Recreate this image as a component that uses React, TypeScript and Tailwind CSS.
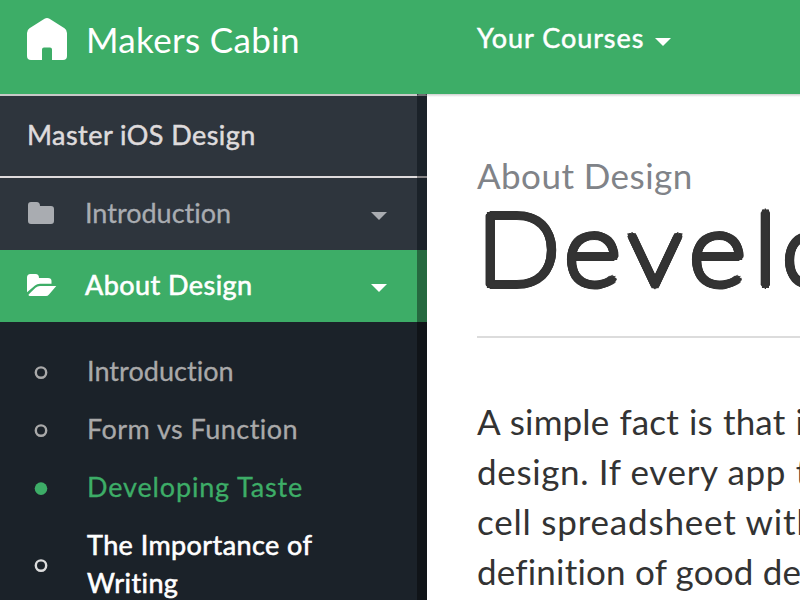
import React from 'react';

function HomeIcon() {
  return (
    <svg className="h-[42px] w-[42px]" viewBox="0 0 42 42" fill="#fff">
      <path d="M18.500 .8 Q21 -.8 23.500 .8 L38.500 10.300 Q41 12 41 15 V38 Q41 42 37 42 H26 V31.500 Q26 29.500 24 29.500 H18 Q16 29.500 16 31.500 V42 H5 Q1 42 1 38 V15 Q1 12 3.500 10.300 Z" />
    </svg>
  );
}

function FolderIcon() {
  return (
    <svg className="h-[22px] w-[30px]" viewBox="0 0 30 22" fill="#a9acb1">
      <path d="M4 0 H9.500 Q13 0 13 4 H24 Q27 4 27 7 V19 Q27 22 24 22 H4 Q1 22 1 19 V3 Q1 0 4 0 Z" />
    </svg>
  );
}

function FolderOpenIcon() {
  return (
    <svg className="h-[22px] w-[30px]" viewBox="0 0 30 22" fill="#fff">
      <path d="M3.500 0 H8.500 Q12 0 12 4 H21 Q24.500 4 24.500 7 V9.800 H13 Q10 9.800 8 11.500 L0 18.300 V3.500 Q0 0 3.500 0 Z" />
      <path d="M13 12 H29.300 L22 20.500 Q20.800 22 19 22 H3 Q1.300 22 1.600 20.500 L8.500 13.800 Q10.500 12 13 12 Z" />
    </svg>
  );
}

function Caret({ className }: { className: string }) {
  return (
    <svg className={`h-[8px] w-[16px] ${className}`} viewBox="0 0 16 8" fill="currentColor">
      <path d="M0 0 H16 L8 8 Z" />
    </svg>
  );
}

function Bullet({ color, filled }: { color: string; filled?: boolean }) {
  return (
    <svg className="mt-[3px] h-[14px] w-[14px] shrink-0" viewBox="0 0 14 14">
      <circle cx="7" cy="6.600" r={filled ? 6.3 : 5.2} fill={filled ? color : 'none'} stroke={filled ? 'none' : color} strokeWidth="2.4" />
    </svg>
  );
}

const lessons = [
  { title: 'Introduction', text: 'text-[#a9a9a9] tracking-[0.050px] [-webkit-text-stroke:0.3px_#a9a9a9]', color: '#a9a9a9' },
  { title: 'Form vs Function', text: 'text-[#a9a9a9] tracking-[0.450px] [-webkit-text-stroke:0.3px_#a9a9a9]', color: '#a9a9a9' },
  { title: 'Developing Taste', text: 'text-[#3dad67] tracking-[0.850px] [-webkit-text-stroke:0.3px_#3dad67]', color: '#3dad67', filled: true },
  { title: 'The Importance of Writing', text: 'text-white tracking-[0.420px] [-webkit-text-stroke:0.6px_#fff]', color: '#dcdcdc' },
];

export default function App() {
  return (
    <div className="flex h-[600px] w-[800px] flex-col overflow-hidden bg-white font-['Lato',sans-serif] [font-variant-ligatures:none]">
      <header className="flex h-[94px] shrink-0 bg-[#3dad67] text-white">
        <div className="flex w-[477px] pt-[18px] pl-[26px]">
          <HomeIcon />
          <span className="ml-[18px] text-[35px] leading-[42px] tracking-[0.350px] whitespace-nowrap">Makers Cabin</span>
        </div>
        <nav className="flex pt-[18px]">
          <span className="w-[166px] text-[27px] leading-[39px] tracking-[0.950px] whitespace-nowrap [-webkit-text-stroke:0.5px_#fff]">Your Courses</span>
          <Caret className="mt-[20px] ml-[12px]" />
        </nav>
      </header>

      <div className="flex min-h-0 flex-1">
        <aside className="flex w-[427px] shrink-0 bg-[#1b2229]">
          <div className="flex w-[417px] flex-col">
            <div className="h-[84px] shrink-0 border-y-2 border-t-[#c8c8c8] border-b-[#dfdbdc] bg-[#2e353d] pl-[27px] text-[27px] leading-[77px] tracking-[0.450px] text-[#dfdbdc] [-webkit-text-stroke:0.5px_#dfdbdc]">
              Master iOS Design
            </div>
            <div className="flex h-[72px] shrink-0 items-center bg-[#2e353d] pl-[27px] text-[#a9acb1]">
              <div className="mb-[2px]"><FolderIcon /></div>
              <span className="mb-[3px] ml-[28px] w-[286px] text-[27px] leading-[40px] [-webkit-text-stroke:0.3px_#a9acb1]">Introduction</span>
              <Caret className="mt-[4px]" />
            </div>
            <div className="flex h-[72px] shrink-0 items-center bg-[#3dad67] pl-[27px] text-white">
              <div className="mb-[2px]"><FolderOpenIcon /></div>
              <span className="mb-[3px] ml-[28px] w-[286px] text-[27px] leading-[40px] tracking-[0.450px] [-webkit-text-stroke:0.6px_#fff]">About Design</span>
              <Caret className="mt-[4px]" />
            </div>
            <ul className="flex flex-col gap-[20px] pt-[30px] pl-[34px]">
              {lessons.map((l) => (
                <li key={l.title} className="flex items-center">
                  <Bullet color={l.color} filled={l.filled} />
                  <span className={`ml-[39px] w-[250px] text-[27px] leading-[38px] ${l.text}`}>{l.title}</span>
                </li>
              ))}
            </ul>
          </div>
          <div className="w-[10px]">
            <div className="h-[2px] rounded-t-[4px] bg-[#6e7073]" />
            <div className="h-[80px] bg-[#1b2229]" />
            <div className="h-[2px] bg-[#858384]" />
            <div className="h-[72px] bg-[#1b2229]" />
            <div className="h-[72px] bg-[#26693f]" />
            <div className="h-[278px] bg-[#101418]" />
          </div>
        </aside>

        <main className="min-w-0 flex-1">
          <div className="h-[3px] bg-linear-to-b from-[#cfcfcf] to-white" />
          <div className="ml-[50px] w-[700px] pt-[56px]">
            <p className="text-[35px] leading-[44px] tracking-[0.450px] text-[#808388]">About Design</p>
            <h1 className="h-[141px] border-b-2 border-[#dcdcdc] text-[101px] leading-[98px] font-thin tracking-[8px] whitespace-nowrap text-[#333] [-webkit-text-stroke:5px_#333] [text-shadow:3.7px_0_0.6px_#333,3.4px_1.4px_0.6px_#333,2.6px_2.6px_0.6px_#333,1.4px_3.4px_0.6px_#333,0_3.7px_0.6px_#333,-1.4px_3.4px_0.6px_#333,-2.6px_2.6px_0.6px_#333,-3.4px_1.4px_0.6px_#333,-3.7px_0_0.6px_#333,-3.4px_-1.4px_0.6px_#333,-2.6px_-2.6px_0.6px_#333,-1.4px_-3.4px_0.6px_#333,0_-3.7px_0.6px_#333,1.4px_-3.4px_0.6px_#333,2.6px_-2.6px_0.6px_#333,3.4px_-1.4px_0.6px_#333,3px_0_#333,2.6px_1.5px_#333,1.5px_2.6px_#333,0_3px_#333,-1.5px_2.6px_#333,-2.6px_1.5px_#333,-3px_0_#333,-2.6px_-1.5px_#333,-1.5px_-2.6px_#333,0_-3px_#333,1.5px_-2.6px_#333,2.6px_-1.5px_#333]">
              <span className="inline-block origin-left scale-x-[1.08]">
                <span className="tracking-[4px]">D</span>eve<span className="tracking-[5px]">l</span>oping Taste
              </span>
            </h1>
            <p className="pt-[58px] text-[35px] leading-[50px] whitespace-nowrap text-[#333]">
              <span className="tracking-[0.150px] [word-spacing:1px]">A simple fact is that if every</span>
              <br />
              <span className="tracking-[0.650px]">design. If every app took the</span>
              <br />
              <span className="tracking-[0.800px]">cell spreadsheet without the</span>
              <br />
              <span className="tracking-[0.200px]">definition of good design</span>
            </p>
          </div>
        </main>
      </div>
    </div>
  );
}
